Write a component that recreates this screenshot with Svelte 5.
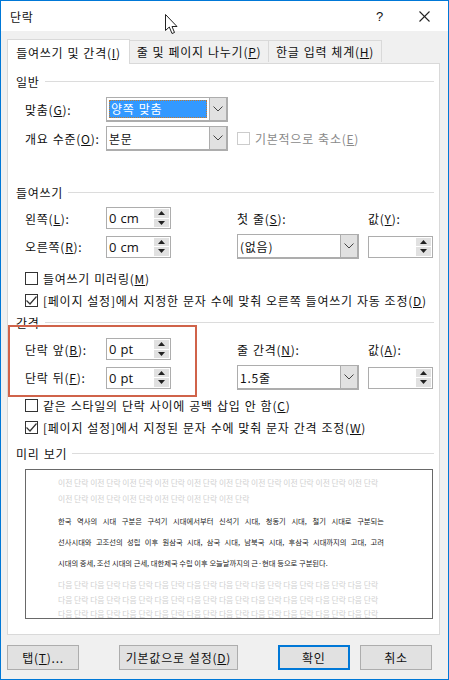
<script lang="ts">
	const repeat = (s: string, n: number) => Array(n).fill(s).join(' ');

	const prevLines = [repeat('이전 단락', 10), repeat('이전 단락', 6)];
	const mainLines = [
		'한국 역사의 시대 구분은 구석기 시대에서부터 신석기 시대, 청동기 시대, 철기 시대로 구분되는',
		'선사시대와 고조선의 성립 이후 원삼국 시대, 삼국 시대, 남북국 시대, 후삼국 시대까지의 고대, 고려',
		'시대의 중세, 조선 시대의 근세, 대한제국 수립 이후 오늘날까지의 근·현대 등으로 구분된다.'
	];
	const nextLines = [repeat('다음 단락', 10), repeat('다음 단락', 10), repeat('다음 단락', 10)];
</script>

{#snippet key(text: string, k: string, tail: string = ':')}
	<span>{text}(<u>{k}</u>){tail}</span>
{/snippet}

{#snippet arrow()}
	<svg width="10" height="6" viewBox="0 0 10 6" fill="none" stroke="#444" stroke-width="1">
		<path d="M0.5 0.5 L5 5 L9.5 0.5" />
	</svg>
{/snippet}

{#snippet combo(value: string, selected: boolean = false)}
	<div class="combo">
		<div class="combo-value">
			{#if selected}
				<span class="combo-sel">{value}</span>
			{:else}
				{value}
			{/if}
		</div>
		<div class="combo-btn">{@render arrow()}</div>
	</div>
{/snippet}

{#snippet spin(value: string)}
	<div class="spin">
		<span class="spin-value">{value}</span>
		<div class="spin-btns">
			<div class="spin-btn"><svg width="7" height="4" viewBox="0 0 7 4"><path d="M3.5 0 L7 4 L0 4 Z" fill="#222" /></svg></div>
			<div class="spin-btn"><svg width="7" height="4" viewBox="0 0 7 4"><path d="M0 0 L7 0 L3.5 4 Z" fill="#222" /></svg></div>
		</div>
	</div>
{/snippet}

{#snippet check(checked: boolean = false, disabled: boolean = false)}
	<span class="box" class:disabled>
		{#if checked}
			<svg width="11" height="11" viewBox="0 0 11 11" fill="none" stroke="#333" stroke-width="1.2">
				<path d="M0.5 5.5 L4 9 L10.5 1.5" />
			</svg>
		{/if}
	</span>
{/snippet}

<div class="window">
	<header class="titlebar">
		<span class="title">단락</span>
		<span class="help">?</span>
		<svg class="close" width="11" height="11" viewBox="0 0 11 11" stroke="#222" stroke-width="1.1">
			<line x1="0.5" y1="0.5" x2="10.5" y2="10.5" />
			<line x1="10.5" y1="0.5" x2="0.5" y2="10.5" />
		</svg>
	</header>

	<div class="body">
		<div class="tabs">
			<div class="tab active">{@render key('들여쓰기 및 간격', 'I', '')}</div>
			<div class="tab t2">{@render key('줄 및 페이지 나누기', 'P', '')}</div>
			<div class="tab t3">{@render key('한글 입력 체계', 'H', '')}</div>
		</div>

		<div class="panel">
			<div class="legend l1"><span>일반</span><i></i></div>
			<div class="general">
				<span class="lbl">{@render key('맞춤', 'G')}</span>
				{@render combo('양쪽 맞춤', true)}
				<span></span>
				<span class="lbl">{@render key('개요 수준', 'O')}</span>
				{@render combo('본문')}
				<div class="check dim">{@render check(false, true)}{@render key('기본적으로 축소', 'E', '')}</div>
			</div>

			<div class="legend l2"><span>들여쓰기</span><i></i></div>
			<div class="fields">
				<span class="lbl">{@render key('왼쪽', 'L')}</span>
				{@render spin('0 cm')}
				<span class="lbl">{@render key('첫 줄', 'S')}</span>
				<span class="lbl">{@render key('값', 'Y')}</span>
				<span class="lbl">{@render key('오른쪽', 'R')}</span>
				{@render spin('0 cm')}
				{@render combo('(없음)')}
				{@render spin('')}
			</div>
			<div class="checks c1">
				<div class="check">{@render check()}{@render key('들여쓰기 미러링', 'M', '')}</div>
				<div class="check">{@render check(true)}{@render key('[페이지 설정]에서 지정한 문자 수에 맞춰 오른쪽 들여쓰기 자동 조정', 'D', '')}</div>
			</div>

			<div class="legend l3"><span>간격</span><i></i></div>
			<div class="fields f2">
				<span class="lbl">{@render key('단락 앞', 'B')}</span>
				{@render spin('0 pt')}
				<span class="lbl">{@render key('줄 간격', 'N')}</span>
				<span class="lbl">{@render key('값', 'A')}</span>
				<span class="lbl">{@render key('단락 뒤', 'F')}</span>
				{@render spin('0 pt')}
				{@render combo('1.5줄')}
				{@render spin('')}
			</div>
			<div class="checks c2">
				<div class="check">{@render check()}{@render key('같은 스타일의 단락 사이에 공백 삽입 안 함', 'C', '')}</div>
				<div class="check">{@render check(true)}{@render key('[페이지 설정]에서 지정된 문자 수에 맞춰 문자 간격 조정', 'W', '')}</div>
			</div>

			<div class="legend l4"><span>미리 보기</span><i></i></div>
			<div class="preview">
				{#each prevLines as line}<div class="pv ghost">{line}</div>{/each}
				<div class="pv-main">
					{#each mainLines as line, i}<div class="pv main" class:just={i < 2}>{line}</div>{/each}
				</div>
				{#each nextLines as line}<div class="pv ghost next">{line}</div>{/each}
			</div>
		</div>

		<div class="actions">
			<button class="wide1">{@render key('탭', 'T', '...')}</button>
			<button class="wide2">{@render key('기본값으로 설정', 'D', '')}</button>
			<button class="primary">확인</button>
			<button>취소</button>
		</div>
	</div>

	<div class="highlight"></div>
	<svg class="cursor" width="13" height="21" viewBox="0 0 13 21">
		<path d="M0.5 0.5 L0.5 16.5 L4.3 13 L7 19.5 L9.5 18.5 L7 12.5 L12 12.5 Z" fill="#fff" stroke="#222" stroke-width="1" />
	</svg>
</div>

<style>
	:global(body) {
		margin: 0;
		background: #f0f0f0;
	}
	.window {
		position: relative;
		box-sizing: border-box;
		width: 449px;
		height: 680px;
		border: 1px solid #0078d7;
		background: #f0f0f0;
		color: #111;
		font-family: "Noto Sans CJK KR", "Noto Sans", sans-serif;
		font-size: 12px;
		letter-spacing: 0.75px;
		word-spacing: 0.7px;
		overflow: hidden;
	}
	u {
		text-underline-offset: 1px;
	}
	.titlebar {
		display: flex;
		align-items: center;
		height: 30px;
		background: #fff;
		padding: 0 0 0 9px;
	}
	.title {
		flex: 1;
	}
	.help {
		font-size: 13px;
		font-weight: 500;
		margin-right: 35px;
		font-family: "Liberation Sans", sans-serif;
	}
	.close {
		margin-right: 18px;
	}
	.body {
		padding: 8px 6px 0;
	}
	.tabs {
		display: flex;
		align-items: flex-end;
		height: 24px;
		position: relative;
		z-index: 1;
	}
	.tab {
		box-sizing: border-box;
		height: 22px;
		border: 1px solid #d9d9d9;
		border-bottom: none;
		border-left: none;
		display: flex;
		align-items: center;
		justify-content: center;
		white-space: nowrap;
		background: #f0f0f0;
		margin-bottom: 1px;
	}
	.tab.active {
		width: 123px;
		height: 25px;
		background: #fff;
		border-left: 1px solid #d9d9d9;
		margin-bottom: -1px;
	}
	.t2 {
		width: 139px;
	}
	.t3 {
		width: 113px;
	}
	.panel {
		box-sizing: border-box;
		width: 433px;
		height: 572px;
		background: #fff;
		border: 1px solid #d9d9d9;
		padding: 0 5px 0 8px;
	}
	.legend {
		display: flex;
		align-items: center;
		gap: 5px;
		height: 18px;
	}
	.legend i {
		flex: 1;
		height: 1px;
		background: #dcdcdc;
	}
	.l1 {
		margin-top: 8px;
	}
	.l2 {
		margin-top: 32px;
	}
	.l3 {
		margin-top: 4px;
	}
	.l4 {
		margin-top: 8px;
	}
	.general {
		display: grid;
		grid-template-columns: 81px 122px 1fr;
		grid-auto-rows: 25px;
		row-gap: 4px;
		align-items: center;
		margin-top: 7px;
		padding-left: 9px;
	}
	.fields {
		display: grid;
		grid-template-columns: 81px 131px 131px 65px;
		grid-template-rows: 22px 25px;
		row-gap: 5px;
		align-items: center;
		margin-top: 6px;
		padding-left: 9px;
	}
	.f2 {
		margin-top: 7px;
	}
	.lbl {
		white-space: nowrap;
	}
	.combo {
		box-sizing: border-box;
		display: flex;
		width: 122px;
		height: 25px;
		border: 2px solid #adadad;
		border-left-width: 1px;
		border-top-width: 1px;
		background: #fff;
	}
	.combo-value {
		flex: 1;
		display: flex;
		align-items: center;
		padding: 0 2px;
		min-width: 0;
		white-space: nowrap;
	}
	.combo-sel {
		flex: 1;
		background: #3399ff;
		color: #fff;
		outline: 1px dotted #c47a2c;
		outline-offset: -1px;
		padding: 1px 2px;
		line-height: 16px;
	}
	.combo-btn {
		width: 16px;
		border-left: 1px solid #adadad;
		background: #e1e1e1;
		display: flex;
		align-items: center;
		justify-content: center;
	}
	.spin {
		box-sizing: border-box;
		display: flex;
		justify-content: space-between;
		align-items: center;
		width: 65px;
		height: 22px;
		border: 1px solid #adadad;
		background: #fff;
	}
	.spin-value {
		padding-left: 2px;
		font-family: "Open Sans", "Noto Sans", sans-serif;
		font-size: 13px;
		letter-spacing: 0;
	}
	.spin-btns {
		display: flex;
		flex-direction: column;
		gap: 1px;
		width: 15px;
		height: 18px;
		margin-right: 1px;
	}
	.spin-btn {
		flex: 1;
		background: #e1e1e1;
		display: flex;
		align-items: center;
		justify-content: center;
	}
	.checks {
		display: flex;
		flex-direction: column;
		gap: 5px;
		padding-left: 9px;
	}
	.c1 {
		margin-top: 11px;
	}
	.c2 {
		margin-top: 7px;
	}
	.check {
		display: flex;
		align-items: center;
		gap: 5px;
		height: 17px;
		white-space: nowrap;
	}
	.check.dim {
		color: #8a8a8a;
		margin-left: 9px;
	}
	.box {
		box-sizing: border-box;
		flex: none;
		width: 13px;
		height: 13px;
		border: 1px solid #333;
		background: #fff;
		display: flex;
		align-items: center;
		justify-content: center;
	}
	.box.disabled {
		border-color: #ccc;
	}
	.preview {
		box-sizing: border-box;
		width: 408px;
		height: 150px;
		margin: 7px 0 0 9px;
		border: 1px solid #696969;
		padding: 5px 0 0 32px;
		overflow: hidden;
		background: #fff;
		letter-spacing: 0;
		word-spacing: 0;
	}
	.pv {
		white-space: nowrap;
		width: 326px;
	}
	.pv-main {
		padding: 4px 0;
	}
	.ghost {
		font-size: 7.8px;
		color: #d0d0d0;
		line-height: 16px;
	}
	.main {
		font-size: 7.3px;
		color: #222;
		line-height: 21px;
	}
	.just {
		white-space: normal;
		text-align: justify;
		text-align-last: justify;
	}
	.next {
		line-height: 14.7px;
	}
	.actions {
		display: flex;
		margin-top: 10px;
	}
	button {
		box-sizing: border-box;
		width: 74px;
		height: 25px;
		border: 1px solid #adadad;
		background: #e1e1e1;
		color: #111;
		font: inherit;
		letter-spacing: inherit;
		word-spacing: inherit;
		padding: 0;
		margin-right: 10px;
		white-space: nowrap;
	}
	.wide1 {
		margin-right: 40px;
	}
	.wide2 {
		width: 122px;
		margin-right: 40px;
	}
	.primary {
		border: 2px solid #0078d7;
	}
	.highlight {
		position: absolute;
		left: 7px;
		top: 324px;
		width: 189px;
		height: 72px;
		box-sizing: border-box;
		border: 2px solid #d0634a;
		pointer-events: none;
	}
	.cursor {
		position: absolute;
		left: 164px;
		top: 13px;
	}
</style>
